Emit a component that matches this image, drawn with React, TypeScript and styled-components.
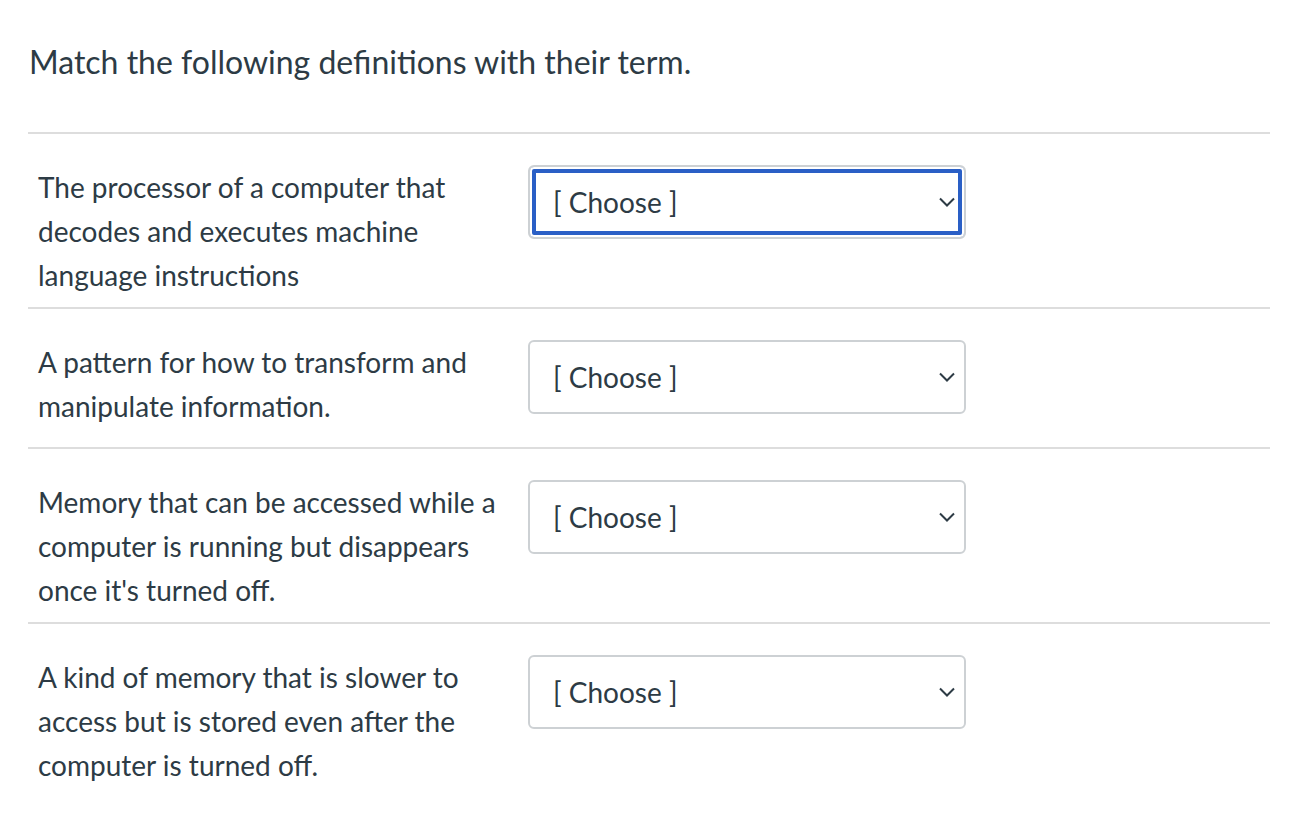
import React from 'react';
import styled, { createGlobalStyle } from 'styled-components';

const GlobalStyle = createGlobalStyle`
  body {
    margin: 0;
    background: #ffffff;
    font-family: Lato, "Open Sans", sans-serif;
    color: #2d3b45;
  }
`;

const Page = styled.div`
  width: 1242px;
  padding: 44px 0 0 28px;
`;

const Heading = styled.h2`
  margin: 0 0 52px 1px;
  font-size: 32px;
  line-height: 36px;
  font-weight: 400;
`;

const Row = styled.div`
  display: flex;
  align-items: flex-start;
  border-top: 2px solid #dddddd;
  padding: 31px 0 0 10px;
`;

const Term = styled.div`
  width: 470px;
  padding-bottom: 10px;
  font-size: 28px;
  line-height: 44px;
`;

const Select = styled.div<{ $focused?: boolean }>`
  display: flex;
  align-items: center;
  justify-content: space-between;
  box-sizing: border-box;
  width: 438px;
  height: 74px;
  margin: 0 0 33px 20px;
  padding: 0 8px 0 23px;
  border: 2px solid #cdd1d4;
  border-radius: 6px;
  font-size: 28px;
  box-shadow: ${p => (p.$focused ? 'inset 0 0 0 2px #fff, inset 0 0 0 6px #2a5fc6' : 'none')};
`;

const Chevron = styled.svg`
  width: 18px;
  height: 10px;
  flex: none;
`;

const items = [
  'The processor of a computer that decodes and executes machine language instructions',
  'A pattern for how to transform and manipulate information.',
  "Memory that can be accessed while a computer is running but disappears once it's turned off.",
  'A kind of memory that is slower to access but is stored even after the computer is turned off.',
];

export default function App() {
  return (
    <>
      <GlobalStyle />
      <Page>
        <Heading>Match the following definitions with their term.</Heading>
        {items.map((text, i) => (
          <Row key={i}>
            <Term>{text}</Term>
            <Select $focused={i === 0}>
              <span>[ Choose ]</span>
              <Chevron viewBox="0 0 18 10">
                <path d="M2 1.5 L9 8.5 L16 1.5" fill="none" stroke="#2d3b45" strokeWidth="2" />
              </Chevron>
            </Select>
          </Row>
        ))}
      </Page>
    </>
  );
}
